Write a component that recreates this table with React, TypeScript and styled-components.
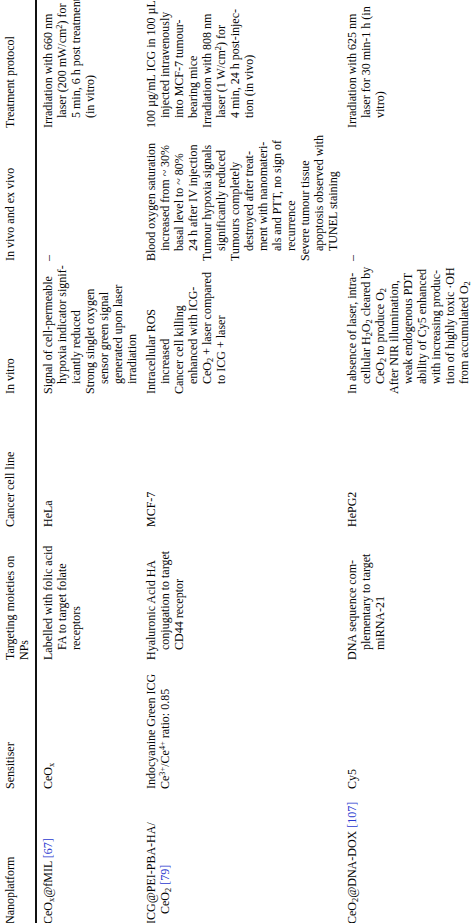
import React from "react";
import styled, {createGlobalStyle} from "styled-components";

type Line = React.ReactNode;
type Para = Line[];
type Cell = Para[];

const COLUMNS = "135px 129px 133px 133px 133px 133px 133px";

const GlobalStyle = createGlobalStyle`
    html, body {
        margin: 0;
        padding: 0;
        background: #ffffff;
        overflow: hidden;
    }
`;

const Sub = styled.sub`
    font-size: 0.7em;
    line-height: 0;
    vertical-align: -0.28em;
`;

const Sup = styled.sup`
    font-size: 0.7em;
    line-height: 0;
    vertical-align: 0.42em;
`;

const Ref = styled.span`
    color: #2c3ad0;
`;

const headers: Line[][] = [
    ["Nanoplatform"],
    ["Sensitiser"],
    ["Targeting moieties on", "NPs"],
    ["Cancer cell line"],
    ["In vitro"],
    ["In vivo and ex vivo"],
    ["Treatment protocol"],
];

const rows: Cell[][] = [
    [
        [[<>CeO<Sub>x</Sub>@fMIL <Ref>[67]</Ref></>]],
        [[<>CeO<Sub>x</Sub></>]],
        [["Labelled with folic acid", "FA to target folate", "receptors"]],
        [["HeLa"]],
        [
            ["Signal of cell-permeable", "hypoxia indicator signif-", "icantly reduced"],
            ["Strong singlet oxygen", "sensor green signal", "generated upon laser", "irradiation"],
        ],
        [["–"]],
        [["Irradiation with 660 nm", <>laser (200 mW/cm<Sup>2</Sup>) for</>, "5 min, 6 h post treatment", "(in vitro)"]],
    ],
    [
        [["ICG@PEI-PBA-HA/", <>CeO<Sub>2</Sub> <Ref>[79]</Ref></>]],
        [["Indocyanine Green ICG"], [<>Ce<Sup>3+</Sup>/Ce<Sup>4+</Sup> ratio: 0.85</>]],
        [["Hyaluronic Acid HA", "conjugation to target", "CD44 receptor"]],
        [["MCF-7"]],
        [
            ["Intracellular ROS", "increased"],
            ["Cancer cell killing", "enhanced with ICG-", <>CeO<Sub>2</Sub> + laser compared</>, "to ICG + laser"],
        ],
        [
            ["Blood oxygen saturation", "increased from ~ 30%", "basal level to ~ 80%", "24 h after IV injection"],
            ["Tumour hypoxia signals", "significantly reduced"],
            ["Tumours completely", "destroyed after treat-", "ment with nanomateri-", "als and PTT, no sign of", "recurrence"],
            ["Severe tumour tissue", "apoptosis observed with", "TUNEL staining"],
        ],
        [
            ["100 µg/mL ICG in 100 µL", "injected intravenously", "into MCF-7 tumour-", "bearing mice"],
            ["Irradiation with 808 nm", <>laser (1 W/cm<Sup>2</Sup>) for</>, "4 min, 24 h post-injec-", "tion (in vivo)"],
        ],
    ],
    [
        [[<>CeO<Sub>2</Sub>@DNA-DOX <Ref>[107]</Ref></>]],
        [["Cy5"]],
        [["DNA sequence com-", "plementary to target", "miRNA-21"]],
        [["HePG2"]],
        [
            [
                "In absence of laser, intra-",
                <>cellular H<Sub>2</Sub>O<Sub>2</Sub> cleared by</>,
                <>CeO<Sub>2</Sub> to produce O<Sub>2</Sub></>,
            ],
            [
                "After NIR illumination,",
                "weak endogenous PDT",
                "ability of Cy5 enhanced",
                "with increasing produc-",
                "tion of highly toxic ·OH",
                <>from accumulated O<Sub>2</Sub></>,
            ],
        ],
        [["–"]],
        [["Irradiation with 625 nm", "laser for 30 min-1 h (in", "vitro)"]],
    ],
];

export default function App() {
    return (
        <>
            <GlobalStyle/>
            <Page>
                <Sheet>
                    <HeadRow>
                        {headers.map((lines, i) => (
                            <HeadCell key={i}>
                                {lines.map((line, j) => <TextLine key={j}>{line}</TextLine>)}
                            </HeadCell>
                        ))}
                    </HeadRow>
                    {rows.map((row, r) => (
                        <BodyRow key={r}>
                            {row.map((cell, c) => (
                                <BodyCell key={c}>
                                    {cell.map((para, p) => (
                                        <div key={p}>
                                            {para.map((line, l) => (
                                                <TextLine key={l} $hang={l > 0}>{line}</TextLine>
                                            ))}
                                        </div>
                                    ))}
                                </BodyCell>
                            ))}
                        </BodyRow>
                    ))}
                </Sheet>
            </Page>
        </>
    );
}

const Page = styled.div`
    width: 474px;
    height: 923px;
    overflow: hidden;
    background: #ffffff;
`;

// the table is printed sideways: laid out upright, then turned a quarter to the left;
// its left edge runs one pixel past the bottom of the page, as in the scan
const Sheet = styled.div`
    width: 925px;
    height: 474px;
    transform-origin: 0 0;
    transform: translateY(924px) rotate(-90deg);
    font-family: "Liberation Serif", "Times New Roman", serif;
    font-size: 12px;
    line-height: 14px;
    color: #050505;
`;

const HeadRow = styled.div`
    display: grid;
    grid-template-columns: ${COLUMNS};
    padding: 3px 0 4px;
    border-bottom: 2px solid #111111;
`;

const BodyRow = styled.div`
    display: grid;
    grid-template-columns: ${COLUMNS};
    padding: 4px 0 1px;
`;

const HeadCell = styled.div`
    min-width: 0;
    padding-right: 6px;
`;

const BodyCell = styled.div`
    min-width: 0;
    padding-right: 6px;
`;

const TextLine = styled.span<{ $hang?: boolean }>`
    display: block;
    white-space: nowrap;
    padding-left: ${props => props.$hang ? "10px" : "0"};
`;
